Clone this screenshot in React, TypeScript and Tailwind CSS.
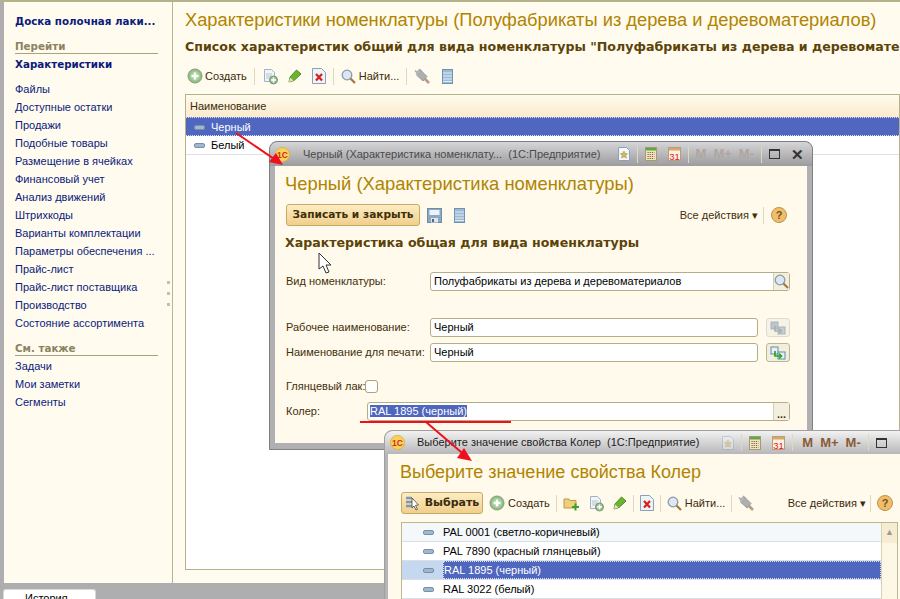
import React from 'react';

const Plus = () => (
  <svg width="16" height="16" viewBox="0 0 16 16" className="shrink-0">
    <circle cx="8" cy="8" r="7" fill="#8fc08a" stroke="#8a9a80" />
    <circle cx="8" cy="8" r="5" fill="#a5cf9b" />
    <path d="M8 4.5v7M4.5 8h7" stroke="#fff" strokeWidth="2.4" />
  </svg>
);

const DocPlus = () => (
  <svg width="17" height="17" viewBox="0 0 17 17" className="shrink-0">
    <path d="M2.5 1.5h7l3 3v9h-10z" fill="#f2f5f8" stroke="#9fb2c6" />
    <path d="M4 6h6M4 8h6M4 10h4" stroke="#b7c4d2" />
    <circle cx="11.5" cy="12" r="4" fill="#8fc08a" stroke="#7f9479" />
    <path d="M11.5 9.5v5M9 12h5" stroke="#fff" strokeWidth="1.6" />
  </svg>
);

const Pencil = () => (
  <svg width="14" height="14" viewBox="0 0 14 14" className="shrink-0">
    <path d="M1 13l1-5 6.5-7 4.5 4-7 6.5z" fill="#69b52f" stroke="#4f8a26" />
    <path d="M2 8.5l3.5 3-4.5 1.5z" fill="#e5e0c8" />
  </svg>
);

const DocX = () => (
  <svg width="14" height="16" viewBox="0 0 14 16" className="shrink-0">
    <path d="M.5.5h9l4 4v11H.5z" fill="#eef3f8" stroke="#8aa0b8" />
    <path d="M4 6l6 6.5M10 6l-6 6.5" stroke="#d8201c" strokeWidth="2.2" />
  </svg>
);

const Magnifier = () => (
  <svg width="15" height="15" viewBox="0 0 15 15" className="shrink-0">
    <circle cx="6" cy="6" r="4.8" fill="#dbe7f3" stroke="#8f98a3" strokeWidth="1.3" />
    <path d="M9.5 9.5l4.5 4.5" stroke="#a8763f" strokeWidth="2.2" />
  </svg>
);

const Plug = () => (
  <svg width="16" height="16" viewBox="0 0 16 16" className="shrink-0">
    <path d="M2 5.5L5.5 2M1 2.5L3.5 5M5 1l2.5 2.5" stroke="#a9a9a6" strokeWidth="1.6" />
    <path d="M2.5 7L7 2.5l6 6L9 13z" fill="#adb0b3" stroke="#9a9da0" />
    <path d="M10.5 10.5l4.5 4.5" stroke="#b89c84" strokeWidth="2.6" />
  </svg>
);

const ListIcon = () => (
  <svg width="11" height="15" viewBox="0 0 11 15" className="shrink-0">
    <rect x=".5" y=".5" width="10" height="14" fill="#9cbad4" stroke="#6d93b5" />
    <path d="M1 4h9M1 7h9M1 10h9M1 12.5h9" stroke="#e3edf5" />
  </svg>
);

const Floppy = () => (
  <svg width="15" height="15" viewBox="0 0 15 15" className="shrink-0">
    <rect x=".5" y=".5" width="14" height="14" fill="#8ca9c4" stroke="#6e8ba8" />
    <rect x="2.5" y="2" width="10" height="5" fill="#eef3f7" />
    <rect x="4" y="10" width="7" height="4.5" fill="#dfe6ec" />
    <rect x="5" y="11" width="2" height="3" fill="#4f6a85" />
  </svg>
);

const Logo1C = () => (
  <svg width="15" height="15" viewBox="0 0 15 15" className="shrink-0">
    <circle cx="7.5" cy="7.5" r="7" fill="#f6d35a" stroke="#e0b04a" />
    <text x="7.5" y="10.5" textAnchor="middle" fontSize="8.5" fontWeight="bold" fill="#d8281c" fontFamily="Liberation Sans, sans-serif">1С</text>
  </svg>
);

const StarDoc = ({ dim }: { dim?: boolean }) => (
  <svg width="12" height="14" viewBox="0 0 12 14" className={dim ? 'shrink-0 opacity-40' : 'shrink-0'}>
    <path d="M.5.5h8l3 3v10H.5z" fill="#f3f6fa" stroke="#8ba2bb" />
    <path d="M6 4l1.2 2.4 2.5.3-1.8 1.8.5 2.6L6 9.8 3.6 11l.5-2.6-1.8-1.8 2.5-.3z" fill="#d7b651" stroke="#a68e45" strokeWidth=".5" />
  </svg>
);

const Calc = () => (
  <svg width="12" height="14" viewBox="0 0 12 14" className="shrink-0">
    <rect x=".5" y=".5" width="11" height="13" fill="#f3e3bd" stroke="#a89a70" />
    <rect x="1" y="1" width="10" height="2.5" fill="#5bab45" />
    <path d="M2.5 5.5h7M2.5 7.5h7M2.5 9.5h7M2.5 11.5h7" stroke="#78664a" strokeDasharray="1.2 1" />
  </svg>
);

const Calendar = () => (
  <svg width="13" height="14" viewBox="0 0 13 14" className="ml-[4px] shrink-0">
    <rect x=".5" y=".5" width="12" height="13" fill="#fbf1df" stroke="#b79f7b" />
    <rect x="1" y="1" width="11" height="2.5" fill="#d9a76a" />
    <text x="6.5" y="12.5" textAnchor="middle" fontSize="9.5" fill="#e0201c" fontFamily="Liberation Sans, sans-serif">31</text>
  </svg>
);

const Help = () => (
  <div className="flex h-4 w-4 shrink-0 items-center justify-center rounded-full border border-[#b8944c] bg-[#f2bd68] text-[11px] font-bold leading-none text-[#6e5428]">?</div>
);

const FolderPlus = () => (
  <svg width="17" height="15" viewBox="0 0 17 15" className="shrink-0">
    <path d="M1 3h5l1 1.5h6V12H1z" fill="#efcf78" stroke="#bb9a45" />
    <path d="M12.5 7.5v7M9 11h7" stroke="#3aa028" strokeWidth="2" />
  </svg>
);

const RowDash = () => (
  <svg width="11" height="5" viewBox="0 0 11 5" className="shrink-0">
    <rect x=".5" y=".5" width="10" height="4" rx="1.5" fill="#9fb8d2" stroke="#7a8ea5" />
  </svg>
);

const Copy = ({ dim }: { dim?: boolean }) => (
  <div className={`flex h-[19px] w-6 items-center justify-center rounded-[3px] border ${dim ? 'border-[#e0dccb] bg-[#f5f2e6]' : 'border-[#bdb78f] bg-[#f0eedd]'}`}>
    <svg width="16" height="14" viewBox="0 0 16 14">
      <rect x="1" y="1" width="7" height="7" fill={dim ? '#bcc4cc' : '#e8f0f7'} stroke={dim ? '#aab3bb' : '#6d86a8'} />
      <rect x="8" y="6" width="7" height="7" fill={dim ? '#c6cdd3' : '#e8f0f7'} stroke={dim ? '#aab3bb' : '#6d86a8'} />
      <path d="M5 5v5h6M9 7.5l2.5 2.5L9 12.5" fill="none" stroke={dim ? '#a9b2a9' : '#2aa81e'} strokeWidth="1.7" />
    </svg>
  </div>
);

const Sep = () => <div className="h-[17px] w-px shrink-0 bg-[#dcd8c2]" />;

const MemButtons = ({ dim }: { dim?: boolean }) => (
  <div className={`flex items-center gap-[7px] text-[13px] font-bold ${dim ? 'text-[#b0a5a0]' : 'text-[#8a5a35]'}`}>
    <span>M</span>
    <span>M+</span>
    <span>M-</span>
  </div>
);

const nav = [
  'Файлы',
  'Доступные остатки',
  'Продажи',
  'Подобные товары',
  'Размещение в ячейках',
  'Финансовый учет',
  'Анализ движений',
  'Штрихкоды',
  'Варианты комплектации',
  'Параметры обеспечения ...',
  'Прайс-лист',
  'Прайс-лист поставщика',
  'Производство',
  'Состояние ассортимента',
];

const FormRow = ({ label, value, children }: { label: string; value: string; children?: React.ReactNode }) => (
  <div className="flex h-[19px] items-center">
    <div className="w-[144px] shrink-0 whitespace-nowrap">{label}</div>
    <div className="flex h-[19px] w-[328px] shrink-0 items-center rounded-[3px] border border-[#b5ae84] bg-white pl-[3px] text-black">
      <span className="flex-1">{value}</span>
    </div>
    {children}
  </div>
);

const colors = [
  { name: 'PAL 0001 (светло-коричневый)', bg: 'bg-[#f4f8fb]' },
  { name: 'PAL 7890 (красный глянцевый)', bg: 'bg-white' },
  { name: 'RAL 1895 (черный)', bg: 'bg-[#c5d8f0]', selected: true },
  { name: 'RAL 3022 (белый)', bg: 'bg-white' },
];

export default function App() {
  return (
    <div className="relative h-[599px] w-[900px] overflow-hidden bg-[#aeaeb0] font-['Liberation_Sans',sans-serif] text-[11px] text-[#3a2c0c]">
      {/* main form */}
      <div className="flex h-[583px] border-t-2 border-[#b5b18a] pl-1">
        <aside className="flex w-[169px] shrink-0 flex-col border-r border-[#b9b58e] bg-[#fffbee] pl-[11px] pr-[14px] pt-[11px] text-[#0b1a7c]">
          <div className="font-['DejaVu_Sans',sans-serif] text-[10.3px] font-bold leading-4 whitespace-nowrap">Доска полочная лаки...</div>
          <div className="mt-[10px] border-b border-[#a8a27e] font-['DejaVu_Sans',sans-serif] text-[10.3px] font-bold leading-[14px] text-[#8a8260]">Перейти</div>
          <div className="mt-[2px] font-['DejaVu_Sans',sans-serif] text-[10.3px] font-bold leading-4">Характеристики</div>
          <div className="mt-[8px] flex flex-col">
            {nav.map((n) => (
              <div key={n} className="h-[18px] leading-[18px] whitespace-nowrap">{n}</div>
            ))}
          </div>
          <div className="mt-[9px] border-b border-[#a8a27e] font-['DejaVu_Sans',sans-serif] text-[10.3px] font-bold leading-[14px] text-[#8a8260]">См. также</div>
          <div className="mt-[1px] flex flex-col">
            {['Задачи', 'Мои заметки', 'Сегменты'].map((n) => (
              <div key={n} className="h-[18px] leading-[18px]">{n}</div>
            ))}
          </div>
        </aside>
        <main className="flex min-w-0 flex-1 flex-col bg-[#fffbee] pl-3">
          <div className="mt-[6px] text-[18.3px] leading-6 whitespace-nowrap text-[#b08400]">Характеристики номенклатуры (Полуфабрикаты из дерева и деревоматериалов)</div>
          <div className="mt-[7px] font-['DejaVu_Sans',sans-serif] text-[12.6px] font-bold leading-4 whitespace-nowrap text-[#5c4308]">Список характеристик общий для вида номенклатуры "Полуфабрикаты из дерева и деревоматериалов"</div>
          <div className="mt-[12px] flex h-[18px] items-center gap-[7px] pl-[2px]">
            <div className="flex items-center gap-[2px]"><Plus /><span>Создать</span></div>
            <Sep />
            <DocPlus />
            <div className="ml-[2px]"><Pencil /></div>
            <div className="ml-[3px]"><DocX /></div>
            <Sep />
            <div className="flex items-center gap-[3px]"><Magnifier /><span>Найти...</span></div>
            <Sep />
            <Plug />
            <div className="ml-[5px]"><ListIcon /></div>
          </div>
          <div className="mt-[9px] mb-[13px] flex flex-1 flex-col border border-[#b5b18a] bg-white">
            <div className="flex h-[22px] items-center bg-gradient-to-b from-[#fffbee] to-[#fbeacb] pl-1">Наименование</div>
            <div className="flex h-[19px] items-center gap-[6px] border-y border-dotted border-[#d8def2] bg-[#5067c0] pl-2 pt-[1px] text-white"><RowDash /><span>Черный</span></div>
            <div className="flex h-[19px] items-center gap-[6px] border-b border-[#dde0e0] pl-2 pt-[1px] text-black"><RowDash /><span>Белый</span></div>
          </div>
        </main>
      </div>

      {/* history tab */}
      <div className="absolute bottom-0 left-[3px] h-[10px] w-[93px] overflow-hidden rounded-t-[3px] border border-b-0 border-[#d8d8d8] bg-white pl-[21px] leading-[16px] text-black">История</div>

      {/* first window */}
      <div className="absolute left-[269px] top-[141px] h-[309px] w-[544px] rounded-t-[8px] border border-[#808080] bg-[#b0b0b2]">
        <div className="flex h-[24px] items-center rounded-t-[8px] bg-gradient-to-b from-[#d6d6d8] to-[#9c9c9e] pl-[5px] pr-[8px] text-[#4a4a4a]">
          <Logo1C />
          <span className="ml-[13px] whitespace-nowrap">Черный (Характеристика номенклату...&nbsp; (1С:Предприятие)</span>
          <div className="ml-auto flex items-center gap-[7px]">
            <StarDoc />
            <Sep />
            <Calc />
            <Calendar />
            <Sep />
            <MemButtons dim />
            <Sep />
            <div className="h-[10px] w-[11px] border border-t-2 border-[#333]" />
            <span className="ml-[4px] text-[15px] font-bold leading-none text-[#333]">✕</span>
          </div>
        </div>
        <div className="mx-[5px] h-[277px] bg-[#fffaec] pl-[11px] pt-[6px] text-[#3f2f0a]">
          <div className="-ml-px text-[18.4px] leading-6 text-[#b08400]">Черный (Характеристика номенклатуры)</div>
          <div className="mt-[8px] flex h-[22px] w-[501px] items-center gap-[7px]">
            <div className="flex h-[22px] w-[134px] items-center justify-center rounded-[3px] border border-[#c9a966] bg-gradient-to-b from-[#fcedc4] to-[#f1cf8c] font-['DejaVu_Sans',sans-serif] text-[10.6px] font-bold text-[#3f2f0a]">Записать и закрыть</div>
            <Floppy />
            <div className="ml-[5px]"><ListIcon /></div>
            <span className="-mr-[2px] ml-auto">Все действия ▾</span>
            <Sep />
            <Help />
          </div>
          <div className="-ml-px mt-[9px] font-['DejaVu_Sans',sans-serif] text-[12.6px] font-bold leading-4 text-[#5c4308]">Характеристика общая для вида номенклатуры</div>
          <div className="mt-[21px]">
            <div className="flex h-[19px] items-center">
              <div className="w-[144px] shrink-0">Вид номенклатуры:</div>
              <div className="flex h-[19px] w-[360px] shrink-0 items-center rounded-[3px] border border-[#b5ae84] bg-white pl-[3px] text-black">
                <span className="flex-1">Полуфабрикаты из дерева и деревоматериалов</span>
                <div className="flex h-full w-[16px] items-center justify-center border-l border-[#d6d1b4] bg-[#f2efdf]"><Magnifier /></div>
              </div>
            </div>
          </div>
          <div className="mt-[27px]">
            <FormRow label="Рабочее наименование:" value="Черный"><div className="ml-2"><Copy dim /></div></FormRow>
          </div>
          <div className="mt-[6px]">
            <FormRow label="Наименование для печати:" value="Черный"><div className="ml-2"><Copy /></div></FormRow>
          </div>
          <div className="mt-[16px] flex h-[16px] items-center">
            <span className="whitespace-nowrap">Глянцевый лак:</span>
            <div className="h-[13px] w-[13px] rounded-[3px] border border-[#a8a27e] bg-white" />
          </div>
          <div className="mt-[8px] flex h-[19px] items-center">
            <div className="w-[81px] shrink-0">Колер:</div>
            <div className="flex h-[19px] w-[423px] shrink-0 items-center rounded-[3px] border border-[#b5ae84] bg-white pl-[2px]">
              <span className="flex-1"><span className="bg-[#4f66bd] text-white">RAL 1895 (черный)</span></span>
              <div className="flex h-full w-[16px] items-end justify-center border-l border-[#d6d1b4] bg-[#f2efdf] font-bold leading-[12px]">...</div>
            </div>
          </div>
        </div>
      </div>

      {/* second window */}
      <div className="absolute left-[384px] top-[430px] h-[180px] w-[530px] rounded-t-[8px] border border-[#a0a0a0] bg-[#b5b5b7]">
        <div className="flex h-[23px] items-center rounded-t-[8px] bg-gradient-to-b from-[#f2f2f2] to-[#b8b8ba] pl-[5px] text-[#222]">
          <Logo1C />
          <span className="ml-[12px] whitespace-nowrap">Выберите значение свойства Колер&nbsp; (1С:Предприятие)</span>
          <div className="ml-[23px] flex items-center gap-[7px]">
            <StarDoc dim />
            <Sep />
            <Calc />
            <Calendar />
            <Sep />
            <div className="ml-[2px]"><MemButtons /></div>
            <Sep />
            <div className="h-[10px] w-[11px] border border-t-2 border-[#333]" />
          </div>
        </div>
        <div className="ml-[3px] h-[160px] bg-[#fffaec] pl-[13px] pt-[6px]">
          <div className="-ml-px text-[18px] leading-6 text-[#b08400]">Выберите значение свойства Колер</div>
          <div className="mt-[8px] flex h-[22px] w-[492px] items-center gap-[6px]">
            <div className="flex h-[22px] w-[82px] items-center justify-center gap-1 rounded-[3px] border border-[#c9a966] bg-gradient-to-b from-[#fcedc4] to-[#f1cf8c] font-['DejaVu_Sans',sans-serif] text-[11px] font-bold">
              <svg width="16" height="16" viewBox="0 0 16 16" className="shrink-0">
                <path d="M1 3h6M1 7h6M1 11h6" stroke="#7d98b5" strokeWidth="2.4" />
                <path d="M7 3l6.5 7-3 .3 2 4-1.5.7-2-4L7 13z" fill="#fff" stroke="#444" strokeWidth=".8" />
              </svg>
              <span>Выбрать</span>
            </div>
            <div className="flex items-center gap-[3px]"><Plus /><span>Создать</span></div>
            <Sep />
            <FolderPlus />
            <div className="ml-[2px]"><DocPlus /></div>
            <div className="ml-[2px]"><Pencil /></div>
            <Sep />
            <DocX />
            <Sep />
            <div className="flex items-center gap-[3px]"><Magnifier /><span>Найти...</span></div>
            <Sep />
            <Plug />
            <span className="-mr-[2px] ml-auto">Все действия ▾</span>
            <Sep />
            <Help />
          </div>
          <div className="mt-[8px] flex w-[497px] border border-[#bdb78f] bg-white text-black">
            <div className="flex-1">
              {colors.map((c) => (
                <div key={c.name} className={`flex h-[19px] items-center gap-[9px] border-b border-[#d9dfe3] pl-[21px] ${c.bg}`}>
                  <RowDash />
                  {c.selected ? (
                    <span className="flex h-full flex-1 items-center border border-dotted border-[#d8def2] bg-[#5067c0] pt-[1px] text-white">{c.name}</span>
                  ) : (
                    <span className="pt-[1px]">{c.name}</span>
                  )}
                </div>
              ))}
            </div>
            <div className="w-[16px] border-l border-[#d6d1b4] bg-[#fdf7e6]">
              <div className="flex h-[20px] items-center justify-center bg-[#f5ecd2] text-[9px] text-[#9a9a9a]">▲</div>
            </div>
          </div>
        </div>
      </div>

      {/* red annotations and mouse pointer over the windows */}
      <svg className="pointer-events-none absolute left-0 top-0" width="900" height="599" viewBox="0 0 900 599">
        <path d="M236 133l44 30" stroke="#f0101c" strokeWidth="2" />
        <path d="M283 165l-14-3 7-9z" fill="#f0101c" />
        <path d="M360 422h151" stroke="#f0101c" strokeWidth="2" />
        <path d="M426 422l42 36" stroke="#f0101c" strokeWidth="2" />
        <path d="M472 461l-15-3 7-10z" fill="#f0101c" />
        <path d="M319 253v16l4-3 3 7 3-1-3-7h5z" fill="#fff" stroke="#333" />
      </svg>

      {/* sash dots */}
      <div className="absolute left-[167px] top-[281px] flex flex-col gap-[8px]">
        <div className="h-[3px] w-[3px] bg-[#c4c0a8]" />
        <div className="h-[3px] w-[3px] bg-[#c4c0a8]" />
        <div className="h-[3px] w-[3px] bg-[#c4c0a8]" />
      </div>
    </div>
  );
}
